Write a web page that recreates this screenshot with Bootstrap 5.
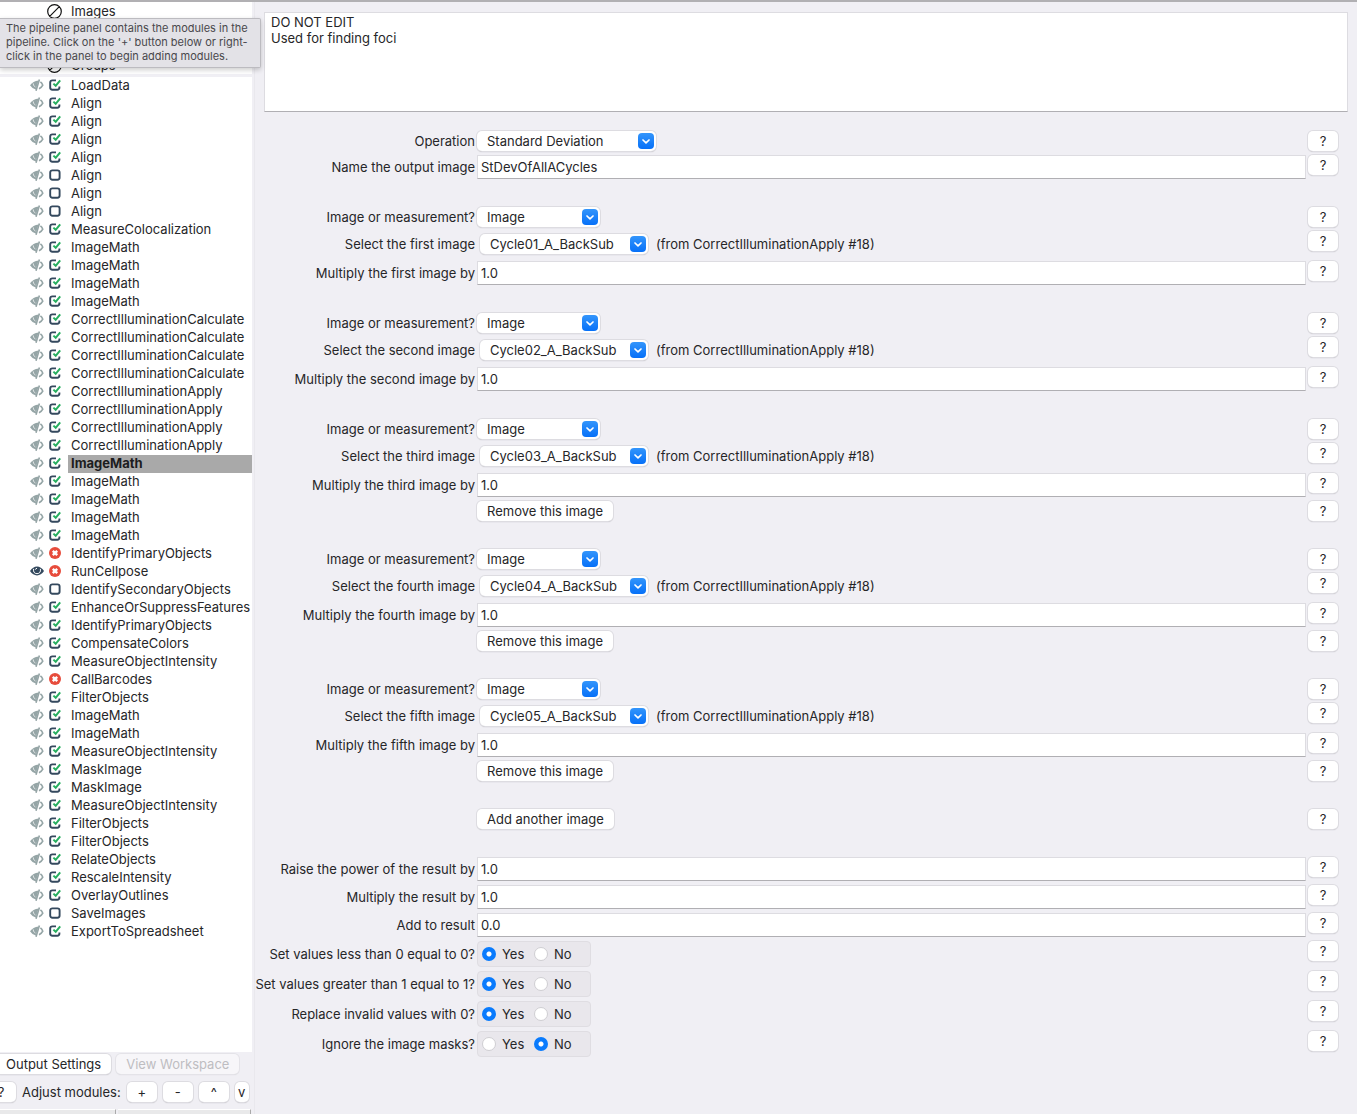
<!DOCTYPE html>
<html lang="en">
<head>
<meta charset="utf-8">
<meta name="viewport" content="width=device-width, initial-scale=1">
<title>Pipeline editor</title>
<link href="https://cdn.jsdelivr.net/npm/bootstrap@5.3.0/dist/css/bootstrap.min.css" rel="stylesheet">
<style>
  body { font: 13px/18px Inter, "Liberation Sans", sans-serif; color: #262628; background: #f0eff4; border-top: 2px solid #b1b0b3; }
  /* the sidebar footer stays at the bottom of the window */
  .side { width: 252px; flex: none; min-height: calc(100vh - 2px); }
  .side-head { padding-bottom: 3px; }
  .head-rows { background: #fff; }
  .head-gap { height: 36px; }
  .head-item { padding-left: 47px; gap: 9px; height: 18px; }
  .head-item svg { width: 15px; height: 15px; }
  .mods { background: #fff; margin: 0; padding: 0; list-style: none; }
  .mod { height: 18px; padding-left: 30px; }
  .mod .eye { width: 14px; height: 14px; padding: 0 0 2px; border: 0; background: none; line-height: 0; margin-right: 5px; }
  .mod .eye svg { width: 14px; height: 12px; display: block; }
  .mod input { appearance: none; width: 12px; height: 14px; margin: 0 7px 0 0; flex: none;
    background: url("data:image/svg+xml,%3Csvg xmlns='http://www.w3.org/2000/svg' viewBox='0 0 12 12'%3E%3Crect x='1.2' y='1.4' width='9.4' height='9.4' rx='2.2' fill='none' stroke='%2334495e' stroke-width='1.9'/%3E%3C/svg%3E") top/12px no-repeat; }
  .mod input:checked { background-image: url("data:image/svg+xml,%3Csvg xmlns='http://www.w3.org/2000/svg' viewBox='0 0 12 12'%3E%3Cpath d='M7 1.4H3.4Q1.2 1.4 1.2 3.6V8.6Q1.2 10.8 3.4 10.8H8.2Q10.4 10.8 10.4 8.6V7.4' fill='none' stroke='%2334495e' stroke-width='1.9'/%3E%3Cpath d='M4.4 4.6L6.7 6.8L11.2 1.4' fill='none' stroke='%2327ae60' stroke-width='2'/%3E%3C/svg%3E"); }
  .mod input.failed { background-image: url("data:image/svg+xml,%3Csvg xmlns='http://www.w3.org/2000/svg' viewBox='0 0 12 12'%3E%3Ccircle cx='6' cy='6' r='6' fill='%23e74c3c'/%3E%3Cpath d='M3.8 3.8L8.2 8.2M8.2 3.8L3.8 8.2' stroke='%23fff' stroke-width='2.4'/%3E%3C/svg%3E"); }
  .mod label { flex: 1; height: 18px; line-height: 16px; padding-left: 3px; white-space: nowrap; }
  .mod.current label { background: #a9a9a9; font-weight: 700; color: #1c1c1e; }
  .side-foot { padding: 2px 0 0; }
  .btn-mac { height: 20px; border: 0; border-radius: 5px; padding: 0 10px; background: #fff; color: #262628; font: inherit; line-height: 18px; white-space: nowrap; flex: none;
    box-shadow: 0 0 0 1px #dddce1, 0 1px 1px #a5a4a8; }
  .btn-mac:disabled { background: #f7f6f9; color: #bebdc1; box-shadow: 0 0 0 1px #e4e3e8, 0 1px 1px #cfced2; }
  .btn-sq { width: 30px; padding: 0 0 1px; }
  .foot-a { gap: 5px; margin-left: -4px; }
  .foot-b { gap: 6px; margin: 8px 0 0 -14px; padding-right: 4px; }
  .btn-cut { width: 14px; overflow: hidden; }
  .strips { gap: 2px; height: 5px; margin-top: 7px; padding-right: 1px; }
  .strips div { flex: 8; background: #e9e9ea; border-top: 1px solid #fff; border-right: 1px solid #aaa; }
  .strips div:first-child { flex: 7; }
  .hint { position: absolute; left: 0; top: 18px; width: 261px; padding: 2px 4px 4px 6px; font-size: 11px; line-height: 14px; color: #49484c;
    background: #e3e2e7; border: 1px solid #bcbbc0; border-left: 0; border-radius: 0 2px 2px 0; box-shadow: 0 2px 5px #0003; z-index: 5; white-space: nowrap; }
  .divide { width: 3px; flex: none; border-right: 1px solid #e9e8ed; }
  .pane { min-width: 0; padding: 10px 9px 0 0; }
  .notes { height: 100px; margin: 0 0 19px 9px; width: calc(100% - 9px); resize: none; border: 1px solid #dddce1; border-bottom-color: #b0afb3; background: #fff; color: inherit; line-height: 16px; padding: 1px 6px; display: block; border-radius: 0; outline: 0; }
  .group { margin-bottom: 28px; padding-right: 10px; }
  .line { margin-bottom: 4px; gap: 2px; }
  .line-label { width: 220px; flex: none; text-align: right; white-space: nowrap; }
  .field { flex: 1; min-width: 0; }
  .text-in { width: 100%; height: 24px; display: block; border: 1px solid #dddce1; border-bottom-color: #b0afb3; background: #fff; color: inherit; padding: 0 3px 1px; border-radius: 0; outline: 0; }
  .pick { appearance: none; display: block; height: 20px; border: 0; border-radius: 5px; color: inherit; padding: 0 24px 1px 10px; line-height: 18px;
    box-shadow: 0 0 0 1px #dddce1, 0 1px 1px #a5a4a8;
    background: #fff url("data:image/svg+xml,%3Csvg xmlns='http://www.w3.org/2000/svg' viewBox='0 0 16 16'%3E%3Cdefs%3E%3ClinearGradient id='g' x2='0' y2='1'%3E%3Cstop stop-color='%233395fb'/%3E%3Cstop offset='1' stop-color='%230670f8'/%3E%3C/linearGradient%3E%3C/defs%3E%3Crect width='16' height='16' rx='4' fill='url(%23g)'/%3E%3Cpath d='M5 7L8 9.8L11 7' fill='none' stroke='%23fff' stroke-width='1.7' stroke-linecap='round' stroke-linejoin='round'/%3E%3C/svg%3E") right 2px center/16px no-repeat; }
  .pick-op { width: 179px; } .pick-kind { width: 123px; } .pick-image { width: 168px; }
  .source-row { padding: 3px 0 3px 3px; gap: 8px; }
  .yesno { width: 114px; height: 26px; background: #e9e7ec; border: 1px solid #dfdde2; border-radius: 4px; padding: 0 4px; }
  .yesno input { appearance: none; width: 14px; height: 14px; margin: 0; border-radius: 50%; background: #fff; border: 1px solid #cfced2; flex: none; }
  .yesno input:checked { border: 0; background: radial-gradient(circle, #fff 2px, #0a7bfd 3px); }
  .yesno label { width: 38px; padding-left: 6px; white-space: nowrap; }
</style>
</head>
<body>
<svg class="d-none" aria-hidden="true">
  <symbol id="eye-off" viewBox="0 0 14 12">
    <path d="M0 6.3Q3 1.8 8.6 1.4L5.8 10.4Q2.1 9.8 0 6.3Z" fill="#95a5a6"/>
    <path d="M3.2 4.4Q3 6.8 5.4 8" fill="none" stroke="#fff" stroke-width=".7"/>
    <path d="M9.4.4L6 11.8M10.4 2.9Q12 4.1 12.8 6.2Q11.6 8.6 9 9.7" fill="none" stroke="#95a5a6" stroke-width="1.6"/>
  </symbol>
  <symbol id="eye-on" viewBox="0 0 14 12">
    <path d="M0 6Q3 1.4 7 1.4T14 6Q11 10.4 7 10.4T0 6Z" fill="#34495e"/>
    <path d="M3.6 3.9Q2.9 8.4 7 8.7Q11.1 8.4 10.4 3.9" fill="none" stroke="#fff" stroke-width="1"/>
    <path d="M5.4 4.6Q5.6 3.4 7 3.3" fill="none" stroke="#fff" stroke-width="1"/>
  </symbol>
  <symbol id="barred" viewBox="0 0 15 15"><path d="M12.3 2.7L2.7 12.3M14.3 7.5A6.8 6.8 0 1 1 .7 7.5A6.8 6.8 0 1 1 14.3 7.5" fill="none" stroke="#111" stroke-width="1.2"/></symbol>
</svg>

<div class="d-flex align-items-stretch">
  <aside class="side d-flex flex-column overflow-hidden">
    <div class="side-head">
      <div class="head-rows">
        <div class="head-item d-flex align-items-center"><svg><use href="#barred"/></svg><span>Images</span></div>
        <div class="head-gap"></div>
        <div class="head-item d-flex align-items-center"><svg><use href="#barred"/></svg><span>Groups</span></div>
      </div>
    </div>
    <ul class="mods flex-grow-1" id="mods"></ul>
    <div class="side-foot">
      <div class="foot-a d-flex"><button class="btn-mac">Output Settings</button><button class="btn-mac" disabled>View Workspace</button></div>
      <div class="foot-b d-flex align-items-center">
        <button class="btn-mac btn-sq">?</button><span class="text-nowrap flex-grow-1">Adjust modules:</span>
        <button class="btn-mac btn-sq">+</button><button class="btn-mac btn-sq">-</button><button class="btn-mac btn-sq">^</button><button class="btn-mac btn-sq btn-cut">v</button>
      </div>
      <div class="strips d-flex"><div></div><div></div></div>
    </div>
  </aside>
  <div class="divide"></div>
  <main class="pane flex-grow-1">
    <textarea class="notes" aria-label="Module notes">DO NOT EDIT
Used for finding foci</textarea>
    <form id="settings"></form>
  </main>
</div>
<div class="hint" role="tooltip">The pipeline panel contains the modules in the<br>pipeline. Click on the '+' button below or right-<br>click in the panel to begin adding modules.</div>

<script>
  // one letter per module instance: 1 enabled, 0 disabled, x failed, c current
  const modules = [
    ["LoadData", "1"], ["Align", "1111000"], ["MeasureColocalization", "1"], ["ImageMath", "1111"],
    ["CorrectIlluminationCalculate", "1111"], ["CorrectIlluminationApply", "1111"], ["ImageMath", "c1111"],
    ["IdentifyPrimaryObjects", "x"], ["RunCellpose", "x"], ["IdentifySecondaryObjects", "0"],
    ["EnhanceOrSuppressFeatures", "1"], ["IdentifyPrimaryObjects", "1"], ["CompensateColors", "1"],
    ["MeasureObjectIntensity", "1"], ["CallBarcodes", "x"], ["FilterObjects", "1"], ["ImageMath", "11"],
    ["MeasureObjectIntensity", "1"], ["MaskImage", "11"], ["MeasureObjectIntensity", "1"], ["FilterObjects", "11"],
    ["RelateObjects", "1"], ["RescaleIntensity", "1"], ["OverlayOutlines", "1"], ["SaveImages", "0"], ["ExportToSpreadsheet", "1"]
  ];
  let n = 0;
  document.getElementById("mods").innerHTML = modules.map(([name, states]) => [...states].map(s => {
    const id = "m" + n++;
    return `<li class="mod d-flex align-items-center ${s === "c" ? "current" : ""}">
      <button class="eye" aria-label="Show window"><svg><use href="#${name === "RunCellpose" ? "eye-on" : "eye-off"}"/></svg></button>
      <input type="checkbox" id="${id}" ${"1c".includes(s) ? "checked" : ""} class="${s === "x" ? "failed" : ""}"><label for="${id}">${name}</label></li>`;
  }).join("")).join("");

  let k = 0;
  const line = (label, make, forControl = true) => {
    const id = "f" + k++;
    const tag = label ? `<label class="line-label align-self-center" for="${id}">${label}</label>` : `<span class="line-label"></span>`;
    return `<div class="line d-flex align-items-start">${tag}<div class="field">${make(id)}</div><button type="button" class="btn-mac btn-sq" aria-label="Help">?</button></div>`;
  };
  const text = v => id => `<input class="text-in" type="text" id="${id}" value="${v}">`;
  const pick = (v, c) => id => `<select class="pick ${c}" id="${id}"><option>${v}</option></select>`;
  const source = v => id => `<div class="source-row d-flex align-items-center">${pick(v, "pick-image")(id)}<span>(from CorrectIlluminationApply #18)</span></div>`;
  const push = t => () => `<button type="button" class="btn-mac d-block">${t}</button>`;
  const yesno = yes => id => `<div class="yesno d-flex align-items-center"><input type="radio" name="${id}" id="${id}" ${yes ? "checked" : ""}><label for="${id}">Yes</label><input type="radio" name="${id}" id="${id}n" ${yes ? "" : "checked"}><label for="${id}n">No</label></div>`;
  const group = (...rows) => `<div class="group">${rows.join("")}</div>`;

  document.getElementById("settings").innerHTML =
    group(line("Operation", pick("Standard Deviation", "pick-op")), line("Name the output image", text("StDevOfAllACycles"))) +
    ["first", "second", "third", "fourth", "fifth"].map((w, i) => group(
      line("Image or measurement?", pick("Image", "pick-kind")),
      line(`Select the ${w} image`, source(`Cycle0${i + 1}_A_BackSub`)),
      line(`Multiply the ${w} image by`, text("1.0")),
      i > 1 ? line("", push("Remove this image")) : "")).join("") +
    group(line("", push("Add another image"))) +
    group(line("Raise the power of the result by", text("1.0")), line("Multiply the result by", text("1.0")), line("Add to result", text("0.0")),
      line("Set values less than 0 equal to 0?", yesno(true)), line("Set values greater than 1 equal to 1?", yesno(true)),
      line("Replace invalid values with 0?", yesno(true)), line("Ignore the image masks?", yesno(false)));
</script>
<script src="https://cdn.jsdelivr.net/npm/bootstrap@5.3.0/dist/js/bootstrap.bundle.min.js"></script>
</body>
</html>
